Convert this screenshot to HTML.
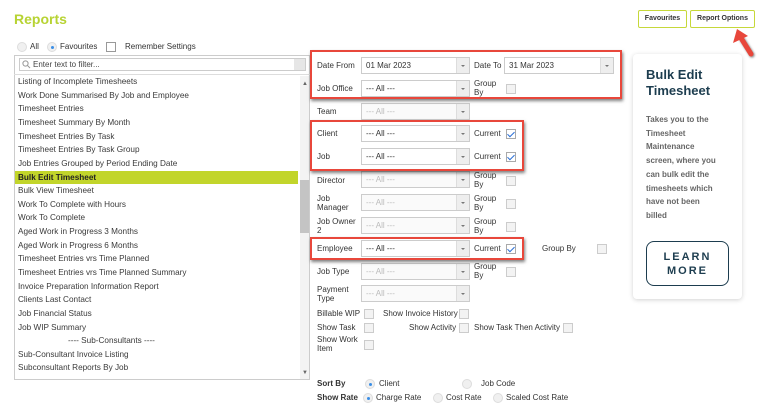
<!DOCTYPE html>
<html><head><meta charset="utf-8"><style>
*{box-sizing:border-box;margin:0;padding:0}
body{width:768px;height:412px;background:#fff;font-family:"Liberation Sans",sans-serif;font-size:8px;color:#333;position:relative;overflow:hidden}
.a{position:absolute;white-space:nowrap}
.li{position:absolute;left:18px;color:#3a3a3a;font-size:8.2px}
.sel{position:absolute;height:17px;border:1px solid #ccc;background:#fff;font-size:8px;padding:3px 0 0 4px;color:#333}
.sel::after{content:"";position:absolute;right:0;top:0;width:12px;height:15px;background:#eee;border-left:1px solid #ddd}
.sel i{position:absolute;right:4px;top:7px;border:2px solid transparent;border-top:2px solid #777;z-index:2}
.dis{color:#bbb;background:#fafafa}
.cb{position:absolute;width:10px;height:10px;border:1px solid #ccc;background:#f3f3f3}
.ck{background:#fff;border-color:#aaa}
.ck::after{content:"";position:absolute;left:2px;top:0px;width:3px;height:6px;border:solid #2a6fd6;border-width:0 1.5px 1.5px 0;transform:rotate(45deg)}
.red{position:absolute;border:2.5px solid #e8473b;box-shadow:1px 2px 3px rgba(0,0,0,.5)}
.rd{position:absolute;width:10px;height:10px;border-radius:50%;border:1px solid #ddd;background:#f0f0f0}
.rd.on::after{content:"";position:absolute;left:3px;top:3px;width:3px;height:3px;border-radius:50%;background:#3a8ee6}
.lb{position:absolute;left:317px;line-height:9px}
</style></head><body>
<div class="a" style="left:14px;top:11px;font-size:14px;font-weight:bold;color:#b7d333">Reports</div>
<div class="a" style="left:638px;top:10px;width:49px;height:18px;border:1.5px solid #c6d83a;border-radius:2px;font-size:7px;font-weight:bold;text-align:center;line-height:15px;color:#333">Favourites</div>
<div class="a" style="left:690px;top:10px;width:65px;height:18px;border:1.5px solid #c6d83a;border-radius:2px;font-size:7px;font-weight:bold;text-align:center;line-height:15px;color:#333">Report Options</div>
<svg class="a" style="left:728px;top:26px" width="32" height="36"><path d="M23 28 L13 12" stroke="#e8473b" stroke-width="5" stroke-linecap="round" fill="none" style="filter:drop-shadow(1px 1px 1px rgba(0,0,0,.5))"/><path d="M9 3 L5 17 L20 10 Z" fill="#e8473b"/></svg>

<div class="rd" style="left:17px;top:42px"></div><div class="a" style="left:30px;top:42px">All</div>
<div class="rd on" style="left:47px;top:42px"></div><div class="a" style="left:60px;top:42px">Favourites</div>
<div class="cb" style="left:106px;top:42px;background:#fff;border-color:#999"></div><div class="a" style="left:125px;top:42px">Remember Settings</div>

<div class="a" style="left:14px;top:55px;width:296px;height:325px;border:1px solid #ccc"></div>
<div class="a" style="left:19px;top:58px;width:287px;height:13px;border:1px solid #ccc;background:#fff"></div>
<div class="a" style="left:294px;top:59px;width:11px;height:11px;background:#e6e6e6"></div>
<svg class="a" style="left:22px;top:60px" width="9" height="9"><circle cx="3.5" cy="3.5" r="2.6" stroke="#999" fill="none"/><path d="M5.5 5.5 L8 8" stroke="#999"/></svg>
<div class="a" style="left:33px;top:60px;color:#444">Enter text to filter...</div>
<div class="a" style="left:14px;top:74px;width:296px;height:1px;background:#ddd"></div>
<div class="a" style="left:300px;top:76px;width:9px;height:303px;background:#f3f3f3"></div>
<div class="a" style="left:300px;top:180px;width:9px;height:53px;background:#c4c4c4"></div>
<div class="a" style="left:302px;top:81px;font-size:6px;color:#666">▲</div>
<div class="a" style="left:302px;top:370px;font-size:6px;color:#666">▼</div>
<div class="a" style="left:15px;top:171px;width:283px;height:13px;background:#c2d52b"></div>
<div class="li" style="top:77px">Listing of Incomplete Timesheets</div>
<div class="li" style="top:91px">Work Done Summarised By Job and Employee</div>
<div class="li" style="top:104px">Timesheet Entries</div>
<div class="li" style="top:118px">Timesheet Summary By Month</div>
<div class="li" style="top:132px">Timesheet Entries By Task</div>
<div class="li" style="top:145px">Timesheet Entries By Task Group</div>
<div class="li" style="top:159px">Job Entries Grouped by Period Ending Date</div>
<div class="li" style="top:173px;font-weight:bold;color:#222">Bulk Edit Timesheet</div>
<div class="li" style="top:186px">Bulk View Timesheet</div>
<div class="li" style="top:200px">Work To Complete with Hours</div>
<div class="li" style="top:213px">Work To Complete</div>
<div class="li" style="top:227px">Aged Work in Progress 3 Months</div>
<div class="li" style="top:241px">Aged Work in Progress 6 Months</div>
<div class="li" style="top:254px">Timesheet Entries vrs Time Planned</div>
<div class="li" style="top:268px">Timesheet Entries vrs Time Planned Summary</div>
<div class="li" style="top:282px">Invoice Preparation Information Report</div>
<div class="li" style="top:295px">Clients Last Contact</div>
<div class="li" style="top:309px">Job Financial Status</div>
<div class="li" style="top:323px">Job WIP Summary</div>
<div class="li" style="top:336px;left:68px">---- Sub-Consultants ----</div>
<div class="li" style="top:350px">Sub-Consultant Invoice Listing</div>
<div class="li" style="top:363px">Subconsultant Reports By Job</div>

<div class="lb" style="top:61px">Date From</div>
<div class="sel" style="left:361px;top:57px;width:109px">01 Mar 2023<i></i></div>
<div class="a" style="left:474px;top:61px">Date To</div>
<div class="sel" style="left:504px;top:57px;width:110px">31 Mar 2023<i></i></div>
<div class="lb" style="top:84px">Job Office</div>
<div class="sel" style="left:361px;top:80px;width:109px">--- All ---<i></i></div>
<div class="a" style="left:474px;top:79px;line-height:9px">Group<br>By</div><div class="cb" style="left:506px;top:84px"></div>
<div class="lb" style="top:107px">Team</div>
<div class="sel dis" style="left:361px;top:103px;width:109px">--- All ---<i></i></div>
<div class="lb" style="top:129px">Client</div>
<div class="sel" style="left:361px;top:125px;width:109px">--- All ---<i></i></div>
<div class="a" style="left:474px;top:129px">Current</div><div class="cb ck" style="left:506px;top:129px"></div>
<div class="lb" style="top:152px">Job</div>
<div class="sel" style="left:361px;top:148px;width:109px">--- All ---<i></i></div>
<div class="a" style="left:474px;top:152px">Current</div><div class="cb ck" style="left:506px;top:152px"></div>
<div class="lb" style="top:176px">Director</div>
<div class="sel dis" style="left:361px;top:171px;width:109px">--- All ---<i></i></div>
<div class="a" style="left:474px;top:171px;line-height:9px">Group<br>By</div><div class="cb" style="left:506px;top:176px"></div>
<div class="lb" style="top:194px">Job<br>Manager</div>
<div class="sel dis" style="left:361px;top:194px;width:109px">--- All ---<i></i></div>
<div class="a" style="left:474px;top:194px;line-height:9px">Group<br>By</div><div class="cb" style="left:506px;top:199px"></div>
<div class="lb" style="top:217px">Job Owner<br>2</div>
<div class="sel dis" style="left:361px;top:217px;width:109px">--- All ---<i></i></div>
<div class="a" style="left:474px;top:217px;line-height:9px">Group<br>By</div><div class="cb" style="left:506px;top:222px"></div>
<div class="lb" style="top:244px">Employee</div>
<div class="sel" style="left:361px;top:240px;width:109px">--- All ---<i></i></div>
<div class="a" style="left:474px;top:244px">Current</div><div class="cb ck" style="left:506px;top:244px"></div>
<div class="a" style="left:542px;top:244px">Group By</div><div class="cb" style="left:597px;top:244px"></div>
<div class="lb" style="top:267px">Job Type</div>
<div class="sel dis" style="left:361px;top:263px;width:109px">--- All ---<i></i></div>
<div class="a" style="left:474px;top:262px;line-height:9px">Group<br>By</div><div class="cb" style="left:506px;top:267px"></div>
<div class="lb" style="top:285px">Payment<br>Type</div>
<div class="sel dis" style="left:361px;top:285px;width:109px">--- All ---<i></i></div>
<div class="lb" style="top:309px">Billable WIP</div><div class="cb" style="left:364px;top:309px"></div>
<div class="a" style="left:383px;top:309px">Show Invoice History</div><div class="cb" style="left:459px;top:309px"></div>
<div class="lb" style="top:323px">Show Task</div><div class="cb" style="left:364px;top:323px"></div>
<div class="a" style="left:409px;top:323px">Show Activity</div><div class="cb" style="left:459px;top:323px"></div>
<div class="a" style="left:474px;top:323px">Show Task Then Activity</div><div class="cb" style="left:563px;top:323px"></div>
<div class="lb" style="top:335px">Show Work<br>Item</div><div class="cb" style="left:364px;top:340px"></div>
<div class="lb" style="top:379px;font-weight:bold">Sort By</div>
<div class="rd on" style="left:365px;top:379px"></div><div class="a" style="left:379px;top:379px">Client</div>
<div class="rd" style="left:462px;top:379px"></div><div class="a" style="left:481px;top:379px">Job Code</div>
<div class="lb" style="top:393px;font-weight:bold">Show Rate</div>
<div class="rd on" style="left:363px;top:393px"></div><div class="a" style="left:376px;top:393px">Charge Rate</div>
<div class="rd" style="left:433px;top:393px"></div><div class="a" style="left:446px;top:393px">Cost Rate</div>
<div class="rd" style="left:493px;top:393px"></div><div class="a" style="left:506px;top:393px">Scaled Cost Rate</div>

<div class="red" style="left:310px;top:50px;width:312px;height:49px"></div>
<div class="red" style="left:310px;top:120px;width:214px;height:51px"></div>
<div class="red" style="left:310px;top:237px;width:214px;height:23px"></div>

<div class="a" style="left:633px;top:54px;width:109px;height:245px;background:#fff;border-radius:4px;box-shadow:0 1px 5px rgba(0,0,0,.18)"></div>
<div class="a" style="left:646px;top:67px;font-size:13px;font-weight:bold;color:#1d3d4f;line-height:16px">Bulk Edit<br>Timesheet</div>
<div class="a" style="left:646px;top:113px;font-size:8px;font-weight:bold;color:#666;line-height:13.7px">Takes you to the<br>Timesheet<br>Maintenance<br>screen, where you<br>can bulk edit the<br>timesheets which<br>have not been<br>billed</div>
<div class="a" style="left:646px;top:241px;width:83px;height:45px;border:1.5px solid #1d3d4f;border-radius:8px;text-align:center;font-size:11px;font-weight:bold;letter-spacing:2px;color:#1d3d4f;line-height:14px;padding-top:8px">LEARN<br>MORE</div>
</body></html>
